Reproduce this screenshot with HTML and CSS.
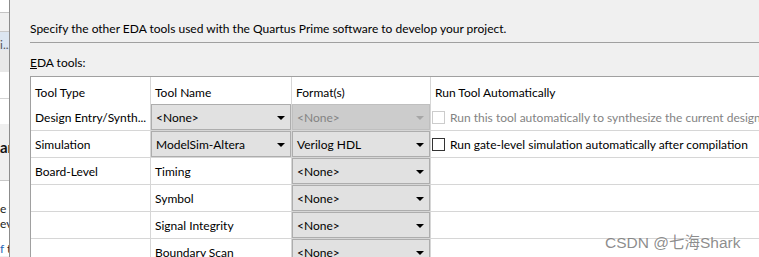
FILE: index.html
```html
<!DOCTYPE html>
<html>
<head>
<meta charset="utf-8">
<link rel="stylesheet" href="styles.css">
</head>
<body>
<div class="side">
  <div class="s-a"></div>
  <div class="s-b"></div>
  <div class="s-c"><span>i...</span></div>
  <div class="s-d"></div>
  <div class="s-e"></div>
  <div class="s-f"></div>
  <div class="s-g"><span>ar</span></div>
  <div class="s-h">
    <div class="s-line1">e y</div>
    <div class="s-line2">ev</div>
    <div class="s-line3"><span class="blue">f</span> th</div>
  </div>
</div>
<div class="main">
  <div class="intro">Specify the other EDA tools used with the Quartus Prime software to develop your project.</div>
  <div class="sep"></div>
  <div class="label"><u>E</u>DA tools:</div>
  <div class="table">
    <div class="cell hd">Tool Type</div>
    <div class="cell hd">Tool Name</div>
    <div class="cell hd">Format(s)</div>
    <div class="cell hd last">Run Tool Automatically</div>

    <div class="cell">Design Entry/Synth...</div>
    <div class="cell combo-cell"><div class="combo"><span>&lt;None&gt;</span><i class="arrow"></i></div></div>
    <div class="cell combo-cell"><div class="combo disabled"><span>&lt;None&gt;</span><i class="arrow"></i></div></div>
    <div class="cell last check-cell dis"><span class="box"></span><span>Run this tool automatically to synthesize the current design</span></div>

    <div class="cell">Simulation</div>
    <div class="cell combo-cell"><div class="combo"><span>ModelSim-Altera</span><i class="arrow"></i></div></div>
    <div class="cell combo-cell"><div class="combo"><span>Verilog HDL</span><i class="arrow"></i></div></div>
    <div class="cell last check-cell"><span class="box"></span><span>Run gate-level simulation automatically after compilation</span></div>

    <div class="cell">Board-Level</div>
    <div class="cell">Timing</div>
    <div class="cell combo-cell"><div class="combo"><span>&lt;None&gt;</span><i class="arrow"></i></div></div>
    <div class="cell last"></div>

    <div class="cell"></div>
    <div class="cell">Symbol</div>
    <div class="cell combo-cell"><div class="combo"><span>&lt;None&gt;</span><i class="arrow"></i></div></div>
    <div class="cell last"></div>

    <div class="cell"></div>
    <div class="cell">Signal Integrity</div>
    <div class="cell combo-cell"><div class="combo"><span>&lt;None&gt;</span><i class="arrow"></i></div></div>
    <div class="cell last"></div>

    <div class="cell"></div>
    <div class="cell">Boundary Scan</div>
    <div class="cell combo-cell"><div class="combo"><span>&lt;None&gt;</span><i class="arrow"></i></div></div>
    <div class="cell last"></div>
  </div>
  <div class="watermark">CSDN @七海Shark</div>
</div>
</body>
</html>
```
FILE: styles.css
```css
html, body {
  margin: 0;
  padding: 0;
}
body {
  width: 759px;
  height: 257px;
  overflow: hidden;
  display: flex;
  background: #f0f0f0;
  font-family: Lato, "Noto Sans CJK SC", sans-serif;
  font-size: 12px;
  color: #000;
}
.side {
  width: 9px;
  flex: none;
  border-right: 1px solid #8c8c8c;
  display: flex;
  flex-direction: column;
  overflow: hidden;
  font-size: 12px;
}
.side > div { flex: none; white-space: nowrap; overflow: hidden; }
.s-a { height: 12px; background: #fff; border-bottom: 1px solid #c4c4c4; }
.s-b { height: 18px; background: #f0f0f0; border-bottom: 1px solid #c8c8c8; }
.s-c { height: 18px; background: #dce6f1; color: #555; line-height: 26px; }
.s-d { height: 22px; background: #e8e8e8; }
.s-e { height: 26px; background: #fff; border-bottom: 1px solid #d4d4d4; }
.s-f { height: 25px; background: #fff; }
.s-g { height: 56px; background: #efefef; border-bottom: 1px solid #c8c8c8; font-weight: bold; font-size: 15px; line-height: 46px; color: #111; }
.s-h { flex: 1; background: #fff; color: #222; padding-top: 20px; }
.s-line1, .s-line2, .s-line3 { height: 15px; line-height: 15px; }
.s-line3 { margin-top: 10px; }
.blue { color: #2a6ab8; }

.main {
  flex: 1;
  position: relative;
  padding-left: 20px;
  overflow: hidden;
}
.intro {
  margin-top: 21px;
  height: 16px;
  line-height: 16px;
  white-space: nowrap;
}
.sep {
  margin-top: 5px;
  height: 1px;
  background: #a0a0a0;
}
.label {
  margin-top: 12px;
  height: 16px;
  line-height: 16px;
}
.table {
  margin-top: 5px;
  width: 900px;
  display: grid;
  grid-template-columns: 120px 141px 139px 1fr;
  grid-auto-rows: 27px;
  border-top: 1px solid #a0a0a0;
  border-left: 1px solid #a0a0a0;
  background: #fff;
}
.cell {
  box-sizing: border-box;
  border-right: 1px solid #d6d6d6;
  border-bottom: 1px solid #d6d6d6;
  display: flex;
  align-items: center;
  padding: 1px 0 0 4px;
  white-space: nowrap;
  overflow: hidden;
  background: #fff;
}
.cell.hd { border-bottom: none; padding-top: 3px; }
.cell.combo-cell { padding: 0; align-items: stretch; }
.combo {
  flex: 1;
  box-sizing: border-box;
  border: 1px solid #adadad;
  background: #e1e1e1;
  display: flex;
  align-items: center;
  padding: 1px 4px 0 4px;
}
.combo span { flex: 1; }
.arrow {
  width: 0;
  height: 0;
  border-left: 4px solid transparent;
  border-right: 4px solid transparent;
  border-top: 4px solid #000;
  margin-right: 1px;
}
.combo.disabled {
  background: #cccccc;
  border-color: #bfbfbf;
  color: #838383;
}
.combo.disabled .arrow { border-top-color: #a6a6a6; }
.check-cell { padding-left: 1px; gap: 5px; }
.box {
  width: 13px;
  height: 13px;
  box-sizing: border-box;
  border: 1px solid #333;
  background: #fff;
  flex: none;
}
.check-cell.dis { color: #838383; }
.check-cell.dis .box { border-color: #cccccc; }
.watermark {
  position: absolute;
  left: 595px;
  top: 230px;
  font-family: "Liberation Sans", "Noto Sans CJK SC", sans-serif;
  font-size: 15.5px;
  color: rgba(120,120,120,0.85);
  white-space: nowrap;
}
```
